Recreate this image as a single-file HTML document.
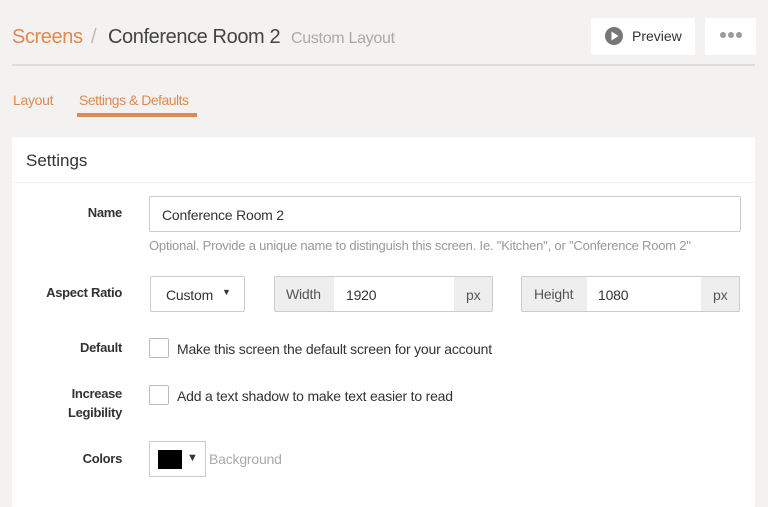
<!DOCTYPE html>
<html><head><style>
*{box-sizing:border-box;margin:0;padding:0}
body{width:768px;height:499px;overflow:hidden;background:#f3f2f0;font-family:"Liberation Sans",sans-serif;color:#333;position:relative}
.a{position:absolute;white-space:nowrap}
.lbl{font-weight:bold;font-size:13px;color:#333;text-align:right;width:110px;letter-spacing:-0.3px}
.box{position:absolute;background:#fff;border:1px solid #ccc;border-radius:2px}
.addon{position:absolute;background:#eee;border:1px solid #ccc;font-size:14px;color:#555}
.t14{font-size:14px;letter-spacing:-0.2px}
.cb{position:absolute;width:20px;height:20px;border:1px solid #bbb;border-radius:2px;background:#fff}
</style></head><body>
<div class="a" style="left:12px;top:26px;font-size:20px;color:#e0894f;letter-spacing:-0.4px">Screens</div>
<div class="a" style="left:91px;top:26px;font-size:20px;color:#bbb">/</div>
<div class="a" style="left:108px;top:26px;font-size:20px;color:#444;letter-spacing:-0.4px">Conference Room 2</div>
<div class="a" style="left:291px;top:30px;font-size:16px;color:#aaa;letter-spacing:-0.3px">Custom Layout</div>
<div class="a" style="left:591px;top:18px;width:104px;height:37px;background:#fff;border-radius:2px"></div>
<svg class="a" style="left:604px;top:26px" width="20" height="20"><circle cx="10" cy="10" r="9" fill="#777"/><path d="M7.5 5.5L14.5 10L7.5 14.5Z" fill="#fff"/></svg>
<div class="a" style="left:632px;top:28px;font-size:14px;color:#333">Preview</div>
<div class="a" style="left:705px;top:18px;width:51px;height:37px;background:#fff;border-radius:2px"></div>
<svg class="a" style="left:719px;top:31px" width="24" height="8"><circle cx="4" cy="4" r="3" fill="#999"/><circle cx="12" cy="4" r="3" fill="#999"/><circle cx="20" cy="4" r="3" fill="#999"/></svg>
<div class="a" style="left:12px;top:64px;width:743px;height:2px;background:#ddd"></div>
<div class="a" style="left:13px;top:92px;font-size:14px;color:#e0894f;letter-spacing:-0.3px">Layout</div>
<div class="a" style="left:79px;top:92px;font-size:14px;color:#e0894f;letter-spacing:-0.5px">Settings &amp; Defaults</div>
<div class="a" style="left:77px;top:113px;width:120px;height:4px;background:#e0894f"></div>
<div class="a" style="left:12px;top:137px;width:743px;height:370px;background:#fff;border-radius:2px"></div>
<div class="a" style="left:26px;top:151px;font-size:17px;color:#333">Settings</div>
<div class="a" style="left:12px;top:182px;width:743px;height:1px;background:#f2f2f2"></div>
<div class="a lbl" style="left:12px;top:205px">Name</div>
<div class="box" style="left:149px;top:196px;width:592px;height:36px"></div>
<div class="a t14" style="left:162px;top:207px">Conference Room 2</div>
<div class="a" style="left:149px;top:238px;font-size:13px;color:#999;letter-spacing:-0.2px">Optional. Provide a unique name to distinguish this screen. Ie. "Kitchen", or "Conference Room 2"</div>
<div class="a lbl" style="left:12px;top:285px">Aspect Ratio</div>
<div class="box" style="left:150px;top:276px;width:95px;height:36px"></div>
<div class="a t14" style="left:166px;top:287px">Custom</div>
<div class="a" style="left:222px;top:287px;font-size:9px;color:#333">▼</div>
<div class="addon" style="left:274px;top:276px;width:219px;height:36px;border-radius:2px"></div>
<div class="a" style="left:334px;top:277px;width:120px;height:34px;background:#fff"></div>
<div class="a t14" style="left:286px;top:286px;color:#555">Width</div>
<div class="a t14" style="left:346px;top:287px">1920</div>
<div class="a t14" style="left:466px;top:287px;color:#555">px</div>
<div class="addon" style="left:521px;top:276px;width:219px;height:36px;border-radius:2px"></div>
<div class="a" style="left:587px;top:277px;width:114px;height:34px;background:#fff"></div>
<div class="a t14" style="left:534px;top:286px;color:#555">Height</div>
<div class="a t14" style="left:598px;top:287px">1080</div>
<div class="a t14" style="left:713px;top:287px;color:#555">px</div>
<div class="a lbl" style="left:12px;top:340px">Default</div>
<div class="cb" style="left:149px;top:338px"></div>
<div class="a t14" style="left:177px;top:341px">Make this screen the default screen for your account</div>
<div class="a lbl" style="left:12px;top:386px">Increase</div>
<div class="a lbl" style="left:12px;top:405px">Legibility</div>
<div class="cb" style="left:149px;top:385px"></div>
<div class="a t14" style="left:177px;top:388px">Add a text shadow to make text easier to read</div>
<div class="a lbl" style="left:12px;top:451px">Colors</div>
<div class="a" style="left:149px;top:441px;width:57px;height:36px;border:1px solid #ccc;background:#fff"></div>
<div class="a" style="left:158px;top:450px;width:24px;height:19px;background:#000"></div>
<div class="a" style="left:187px;top:452px;font-size:11px;color:#333">▼</div>
<div class="a t14" style="left:209px;top:451px;color:#aaa">Background</div>
</body></html>
